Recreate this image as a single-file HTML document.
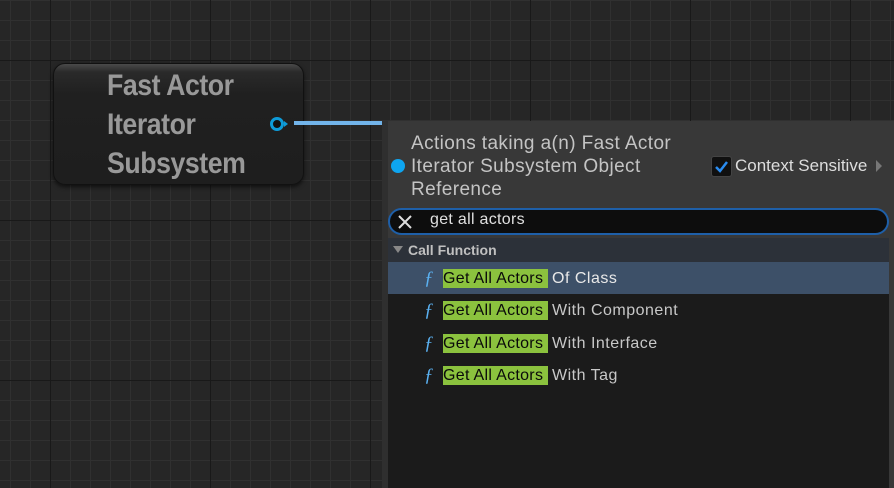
<!DOCTYPE html>
<html><head><meta charset="utf-8"><style>
*{margin:0;padding:0;box-sizing:border-box}
body{width:894px;height:488px;overflow:hidden;position:relative;font-family:"Liberation Sans",sans-serif;
background-color:#262626;
background-image:
linear-gradient(90deg,#191919 0,#191919 1px,transparent 1px),
linear-gradient(0deg,#191919 0,#191919 1px,transparent 1px),
linear-gradient(90deg,#303030 0,#303030 1px,transparent 1px),
linear-gradient(0deg,#303030 0,#303030 1px,transparent 1px);
background-size:160px 160px,160px 160px,20px 20px,20px 20px;
background-position:50px 0,0 61px,10px 0,0 1px;}
.node{position:absolute;left:53px;top:63px;width:251px;height:122px;border-radius:12px;
background:linear-gradient(#4a4a4a 0,#2a2a2a 8px,#202020 30px,#1e1e1e);border:1px solid #111;box-shadow:0 2px 4px rgba(0,0,0,.6)}
.nt{position:absolute;left:107px;top:66px;font-weight:bold;font-size:30px;line-height:39px;color:#999;letter-spacing:-0.5px;transform:scaleX(0.89);transform-origin:0 0;white-space:nowrap}
.pin{position:absolute;left:270px;top:117px;width:14px;height:14px;border-radius:50%;border:3px solid #0e9bd8;background:#111}
.pa{position:absolute;left:284px;top:121px;width:0;height:0;border-left:4px solid #0e9bd8;border-top:3px solid transparent;border-bottom:3px solid transparent}
.wire{position:absolute;left:294px;top:121px;width:90px;height:4px;background:#72b4ea}
.panel{position:absolute;left:382px;top:121px;width:512px;height:367px;background:#383838;border-left:6px solid #2f2f2f}
.hdr{position:absolute;left:411px;top:132px;font-size:19px;line-height:23px;color:#c4c4c4;letter-spacing:0.4px}
.dot{position:absolute;left:391px;top:159px;width:14px;height:14px;border-radius:50%;background:#0ea5f0}
.cb{position:absolute;left:711px;top:156px;width:21px;height:21px;background:#101010;border-radius:3px;border:1px solid #444}
.cs{position:absolute;left:735px;top:156px;font-size:17px;color:#ddd}
.tri{position:absolute;left:876px;top:160px;border-left:6px solid #777;border-top:6px solid transparent;border-bottom:6px solid transparent}
.search{position:absolute;left:388px;top:208px;width:501px;height:27px;border-radius:14px;background:#0d0d0d;border:2px solid #1e5fa8}
.st{position:absolute;left:430px;top:211px;font-size:16px;color:#e0e0e0;letter-spacing:0.3px}
.cat{position:absolute;left:388px;top:238px;width:501px;height:24px;background:#2c3139;color:#c0c0c0;font-weight:bold;font-size:14px;line-height:24px;padding-left:20px}
.cat:before{content:"";position:absolute;left:5px;top:8px;border-top:7px solid #888;border-left:5px solid transparent;border-right:5px solid transparent}
.list{position:absolute;left:388px;top:262px;width:501px;height:226px;background:#1b1b1b}
.row{position:absolute;left:388px;width:501px;height:32px;font-size:16px;color:#c8c8c8;line-height:33px;letter-spacing:0.5px}
.row.sel{background:#3d5068;color:#e8e8e8}
.f{position:absolute;left:36px;color:#5ab0f0;font-style:italic;font-family:"Liberation Serif",serif;font-size:19px}
.g{position:absolute;left:55px;top:7px;height:19px;line-height:20px;background:#8bc23e;color:#0a0a0a;width:105px;letter-spacing:0.3px;white-space:nowrap;overflow:hidden}
.rest{position:absolute;left:164px;white-space:nowrap}
</style></head><body>
<div class="node"></div>
<div class="nt">Fast Actor<br>Iterator<br>Subsystem</div>
<div class="pin"></div><div class="pa"></div>
<div class="wire"></div>
<div class="panel"></div>
<div class="dot"></div>
<div class="hdr">Actions taking a(n) Fast Actor<br>Iterator Subsystem Object<br>Reference</div>
<div class="cb"><svg width="19" height="19" viewBox="0 0 19 19"><path d="M4 10 L8 14 L15 5" stroke="#2a8cf0" stroke-width="2.5" fill="none"/></svg></div>
<div class="cs">Context Sensitive</div>
<div class="tri"></div>
<div class="search"><svg style="position:absolute;left:7px;top:4px" width="16" height="16" viewBox="0 0 16 16"><path d="M2 2L14 14M14 2L2 14" stroke="#ddd" stroke-width="2"/></svg></div>
<div class="st">get all actors</div>
<div class="cat">Call Function</div>
<div class="list"></div>
<div class="row sel" style="top:262px"><span class="f">ƒ</span><span class="g">Get All Actors</span><span class="rest">Of Class</span></div>
<div class="row" style="top:294px"><span class="f">ƒ</span><span class="g">Get All Actors</span><span class="rest">With Component</span></div>
<div class="row" style="top:327px"><span class="f">ƒ</span><span class="g">Get All Actors</span><span class="rest">With Interface</span></div>
<div class="row" style="top:359px"><span class="f">ƒ</span><span class="g">Get All Actors</span><span class="rest">With Tag</span></div>
</body></html>
